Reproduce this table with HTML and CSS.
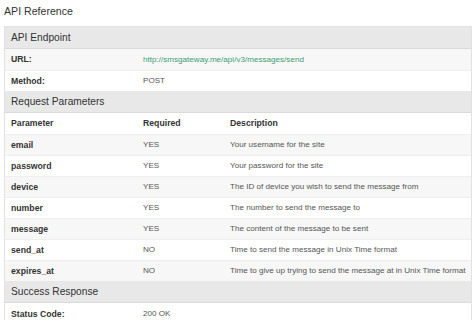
FILE: index.html
```html
<!DOCTYPE html>
<html lang="en">
<head>
    <meta charset="UTF-8">
    <title>API Reference</title>
    <link rel="stylesheet" href="styles.css">
</head>
<body>
    <h1 class="page-title">API Reference</h1>

    <div class="panel">
        <div class="panel-heading">API Endpoint</div>
        <table class="ref-table">
            <colgroup><col class="c1"><col class="c2"><col class="c3"></colgroup>
            <tr class="striped">
                <th>URL:</th>
                <td colspan="2"><a class="link" href="#">http://smsgateway.me/api/v3/messages/send</a></td>
            </tr>
            <tr>
                <th>Method:</th>
                <td colspan="2">POST</td>
            </tr>
        </table>

        <div class="panel-heading">Request Parameters</div>
        <table class="ref-table">
            <colgroup><col class="c1"><col class="c2"><col class="c3"></colgroup>
            <tr class="head-row">
                <th>Parameter</th>
                <th>Required</th>
                <th>Description</th>
            </tr>
            <tr class="striped">
                <th>email</th>
                <td>YES</td>
                <td>Your username for the site</td>
            </tr>
            <tr>
                <th>password</th>
                <td>YES</td>
                <td>Your password for the site</td>
            </tr>
            <tr class="striped">
                <th>device</th>
                <td>YES</td>
                <td>The ID of device you wish to send the message from</td>
            </tr>
            <tr>
                <th>number</th>
                <td>YES</td>
                <td>The number to send the message to</td>
            </tr>
            <tr class="striped">
                <th>message</th>
                <td>YES</td>
                <td>The content of the message to be sent</td>
            </tr>
            <tr>
                <th>send_at</th>
                <td>NO</td>
                <td>Time to send the message in Unix Time format</td>
            </tr>
            <tr class="striped">
                <th>expires_at</th>
                <td>NO</td>
                <td>Time to give up trying to send the message at in Unix Time format</td>
            </tr>
        </table>

        <div class="panel-heading">Success Response</div>
        <table class="ref-table">
            <colgroup><col class="c1"><col class="c2"><col class="c3"></colgroup>
            <tr>
                <th>Status Code:</th>
                <td colspan="2">200 OK</td>
            </tr>
        </table>
    </div>
</body>
</html>
```

FILE: styles.css
```css
* {
    margin: 0;
    padding: 0;
    box-sizing: border-box;
}

body {
    font-family: 'Liberation Sans', Arial, sans-serif;
    font-size: 8.1px;
    color: #555;
    background: #fff;
    padding: 4px 2px 0 4px;
    overflow: hidden;
}

.page-title {
    font-size: 10.6px;
    font-weight: 400;
    color: #333;
    height: 22px;
    line-height: 14px;
}

.panel {
    border: 1px solid #e2e2e2;
    border-bottom: none;
}

.panel-heading {
    background: #e8e8e8;
    border-bottom: 1px solid #dadada;
    color: #333;
    font-size: 10.2px;
    height: 22px;
    line-height: 21px;
    padding: 0 6px;
}

.ref-table {
    width: 100%;
    border-collapse: collapse;
    table-layout: fixed;
}

.ref-table col.c1 { width: 132px; }
.ref-table col.c2 { width: 87px; }

.ref-table th,
.ref-table td {
    height: 21px;
    padding: 0 6px;
    text-align: left;
    vertical-align: middle;
    white-space: nowrap;
    border-top: 1px solid #efefef;
}

.ref-table tr:first-child th,
.ref-table tr:first-child td {
    border-top: none;
}

.ref-table th {
    color: #333;
    font-size: 8.7px;
    font-weight: 700;
}

.ref-table tr.striped {
    background: #f7f7f7;
}

.link {
    color: #3f9c72;
    text-decoration: none;
}
```
